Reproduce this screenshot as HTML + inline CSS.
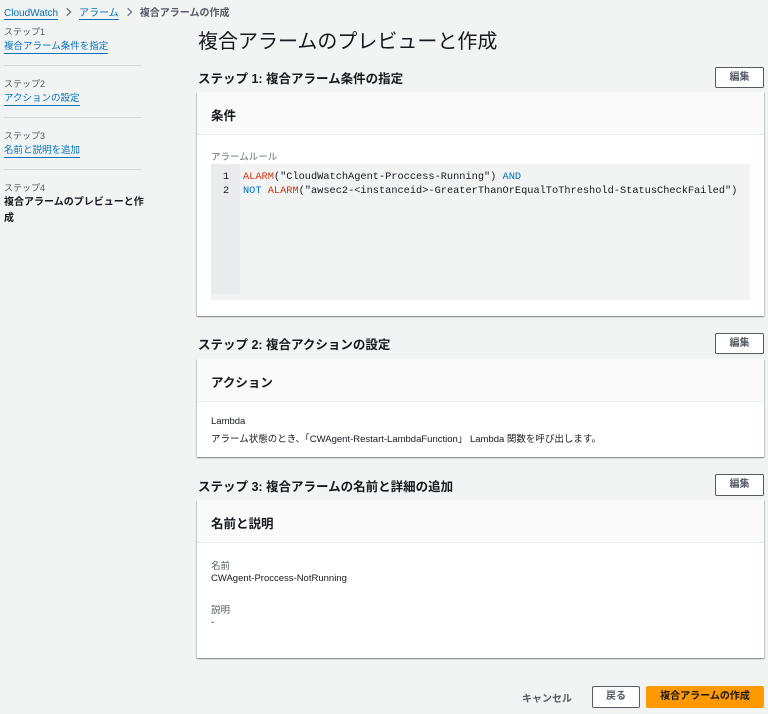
<!DOCTYPE html>
<html><head><meta charset="utf-8"><style>
*{margin:0;padding:0;box-sizing:border-box}
body{width:768px;height:714px;background:#f2f3f3;font-family:"Liberation Sans","Noto Sans CJK JP",sans-serif;color:#16191f;position:relative;overflow:hidden;font-size:11px}
.a{position:absolute;white-space:nowrap}
.lnk{color:#0073bb;border-bottom:1px solid #0073bb;line-height:13px}
.sm{font-size:9px;color:#545b64}
.sep{position:absolute;left:4px;width:137px;height:1px;background:#d5dbdb}
.h2{font-size:12.5px;font-weight:bold}
.btn{position:absolute;background:#fff;border:1px solid #545b64;border-radius:2px;font-size:10px;font-weight:bold;color:#545b64;text-align:center}
.panel{position:absolute;left:197px;width:567px;background:#fff;box-shadow:0 1px 1px rgba(0,28,36,.3),1px 1px 1px rgba(0,28,36,.15),-1px 1px 1px rgba(0,28,36,.15)}
.ph{height:43px;border-bottom:1px solid #eaeded;background:#fafafa;font-size:12.5px;font-weight:bold;padding:13px 14px}
.mono{font-family:"Liberation Mono","DejaVu Sans Mono",monospace;font-size:10.3px;line-height:14px}
.r{color:#d13212}.b{color:#0073bb}
.chev{display:inline-block;width:6px;height:6px;border-right:1.5px solid #545b64;border-top:1.5px solid #545b64;transform:rotate(45deg);margin:0 9px 1px 6px}
</style></head><body>
<div class="a" style="left:4px;top:4px;font-size:10px"><span class="lnk">CloudWatch</span><span class="chev"></span><span class="lnk">アラーム</span><span class="chev"></span><span style="font-weight:bold;color:#545b64">複合アラームの作成</span></div>
<div class="a sm" style="left:4px;top:25px">ステップ1</div>
<div class="a lnk" style="left:4px;top:40px;font-size:9.5px">複合アラーム条件を指定</div>
<div class="sep" style="top:65px"></div>
<div class="a sm" style="left:4px;top:77px">ステップ2</div>
<div class="a lnk" style="left:4px;top:92px;font-size:9.5px">アクションの設定</div>
<div class="sep" style="top:117px"></div>
<div class="a sm" style="left:4px;top:129px">ステップ3</div>
<div class="a lnk" style="left:4px;top:144px;font-size:9.5px">名前と説明を追加</div>
<div class="sep" style="top:169px"></div>
<div class="a sm" style="left:4px;top:181px">ステップ4</div>
<div class="a" style="left:4px;top:195px;font-size:10px;font-weight:bold;line-height:16px;white-space:normal;width:142px;word-break:break-all">複合アラームのプレビューと作成</div>

<div class="a" style="left:198px;top:25px;font-size:20px">複合アラームのプレビューと作成</div>

<div class="a h2" style="left:198px;top:68px">ステップ 1: 複合アラーム条件の指定</div>
<div class="btn" style="left:715px;top:67px;width:49px;height:21px;line-height:19px">編集</div>
<div class="panel" style="top:92px;height:224px">
<div class="ph">条件</div>
<div class="a" style="left:14px;top:57px;font-size:9.5px;color:#687078">アラームルール</div>
<div class="a" style="left:14px;top:72px;width:539px;height:136px;background:#f2f3f3">
<div class="a" style="left:0;top:0;width:29px;height:130px;background:#e9ebed"></div>
<div class="a mono" style="left:12px;top:6px;color:#16191f">1<br>2</div>
<div class="a mono" style="left:32px;top:6px"><span class="r">ALARM</span>("CloudWatchAgent-Proccess-Running") <span class="b">AND</span><br><span class="b">NOT</span> <span class="r">ALARM</span>("awsec2-&lt;instanceid&gt;-GreaterThanOrEqualToThreshold-StatusCheckFailed")</div>
</div>
</div>

<div class="a h2" style="left:198px;top:334px">ステップ 2: 複合アクションの設定</div>
<div class="btn" style="left:715px;top:333px;width:49px;height:21px;line-height:19px">編集</div>
<div class="panel" style="top:359px;height:98px">
<div class="ph">アクション</div>
<div class="a" style="left:14px;top:57px;font-size:9.5px">Lambda</div>
<div class="a" style="left:14px;top:72px;font-size:9.5px">アラーム状態のとき、「CWAgent-Restart-LambdaFunction」 Lambda 関数を呼び出します。</div>
</div>

<div class="a h2" style="left:198px;top:476px">ステップ 3: 複合アラームの名前と詳細の追加</div>
<div class="btn" style="left:715px;top:474px;width:49px;height:22px;line-height:20px">編集</div>
<div class="panel" style="top:500px;height:158px">
<div class="ph">名前と説明</div>
<div class="a" style="left:14px;top:58px;font-size:9.5px;color:#545b64">名前</div>
<div class="a" style="left:14px;top:73px;font-size:9.5px">CWAgent-Proccess-NotRunning</div>
<div class="a" style="left:14px;top:102px;font-size:9.5px;color:#545b64">説明</div>
<div class="a" style="left:14px;top:117px;font-size:9.5px">-</div>
</div>

<div class="a" style="left:522px;top:690px;font-size:10px;font-weight:bold;color:#545b64">キャンセル</div>
<div class="btn" style="left:592px;top:686px;width:48px;height:22px;line-height:20px">戻る</div>
<div class="btn" style="left:646px;top:686px;width:118px;height:22px;line-height:20px;color:#16191f;background:#ff9900;border-color:#ff9900">複合アラームの作成</div>
</body></html>
